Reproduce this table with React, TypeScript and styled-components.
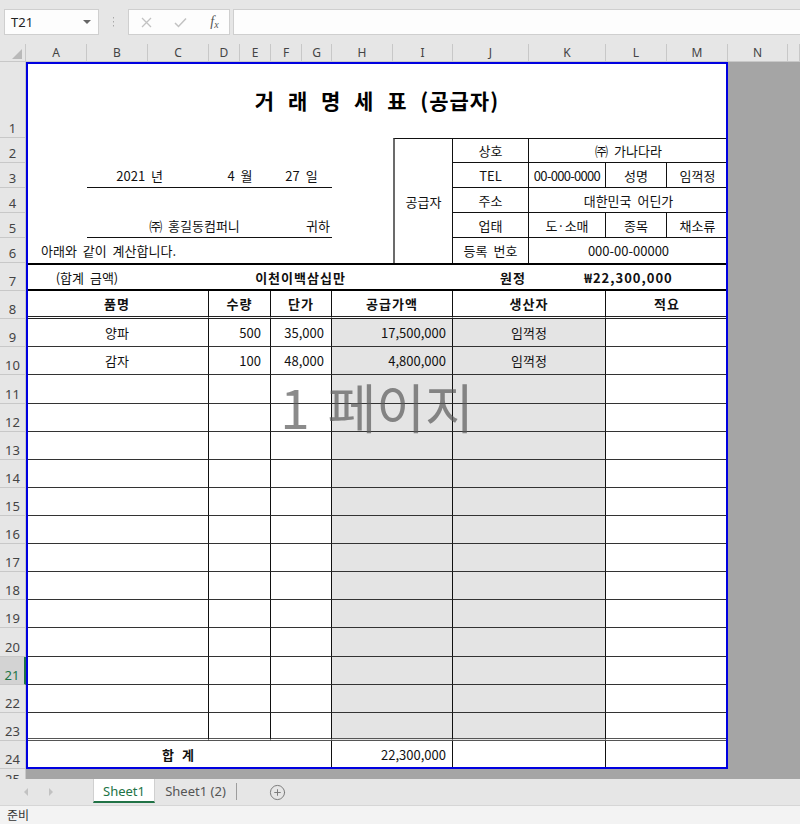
import React from "react";
import styled, { createGlobalStyle } from "styled-components";
import { CirclePlus } from "lucide-react";

const COLS = ["A", "B", "C", "D", "E", "F", "G", "H", "I", "J", "K", "L", "M", "N"];
const colIdx = (l: string) => COLS.indexOf(l) + 2;

const UI_FONT = `"Noto Sans", "Open Sans", "Noto Sans CJK KR", sans-serif`;
const SHEET_FONT = `"Noto Sans CJK KR", "Noto Sans", sans-serif`;

const THIN = "1px solid #111";
const GRID = "1px solid #333";
const THICK = "2px solid #000";
const DOUBLE = "3px double #222";
const DOUBLE_GRAY = "3px double #555";

const GlobalStyle = createGlobalStyle`
  html, body { margin: 0; padding: 0; }
  body { width: 800px; height: 824px; overflow: hidden; background: #e6e6e6; }
  *, *::before, *::after { box-sizing: border-box; }
`;

const Window = styled.div`
  width: 800px;
  height: 824px;
  display: flex;
  flex-direction: column;
  font-family: ${UI_FONT};
  background: #e6e6e6;
`;

/* ---------- formula bar ---------- */
const FormulaBar = styled.div`
  flex: none;
  height: 44px;
  display: flex;
  align-items: flex-start;
  padding: 9px 0 0 4px;
`;

const NameBox = styled.div`
  width: 95px;
  height: 26px;
  background: #fdfdfd;
  border: 1px solid #cfcfcf;
  display: flex;
  align-items: center;
  justify-content: space-between;
  padding: 0 7px 0 6px;
  font-size: 13px;
  color: #222;
`;

const Caret = styled.span`
  width: 0;
  height: 0;
  border-left: 4px solid transparent;
  border-right: 4px solid transparent;
  border-top: 4px solid #666;
`;

const Grip = styled.div`
  width: 29px;
  height: 26px;
  display: flex;
  align-items: center;
  justify-content: center;
`;

const FxBox = styled.div`
  width: 102px;
  height: 26px;
  background: #fdfdfd;
  border: 1px solid #cfcfcf;
  display: grid;
  grid-template-columns: 34px 35px 33px;
  align-items: center;
  justify-items: center;
`;

const FxLabel = styled.span`
  font-family: "Liberation Serif", "DejaVu Serif", serif;
  font-style: italic;
  font-size: 14px;
  color: #555;
  & > small {
    font-size: 10px;
    position: relative;
    top: 2px;
  }
`;

const FormulaInput = styled.div`
  flex: 1;
  margin-left: 3px;
  height: 26px;
  background: #fdfdfd;
  border: 1px solid #cfcfcf;
  border-right: none;
`;

/* ---------- sheet ---------- */
const SheetGrid = styled.div`
  flex: none;
  height: 735px;
  overflow: hidden;
  display: grid;
  grid-template-columns: 26px 61px 61px 61px 31px 31px 31px 30px 61px 60px 76px 77px 61px 61px 60px 1fr;
  grid-template-rows: 18px 76px repeat(5, 25px) repeat(18, 28.12px) 20px;
  background: #a5a5a5;
  font-family: ${SHEET_FONT};
`;

const Corner = styled.div`
  grid-column: 1;
  grid-row: 1;
  background: #e6e6e6;
  border-right: 1px solid #c8c8c8;
  border-bottom: 1px solid #c8c8c8;
  display: flex;
  align-items: flex-end;
  justify-content: flex-end;
  padding: 0 3px 2px 0;
  &::after {
    content: "";
    width: 0;
    height: 0;
    border-left: 10px solid transparent;
    border-bottom: 10px solid #b9b9b9;
  }
`;

const ColHead = styled.div<{ $col: number }>`
  grid-column: ${(p) => p.$col};
  grid-row: 1;
  background: #e6e6e6;
  border-right: 1px solid #c8c8c8;
  border-bottom: 1px solid #c8c8c8;
  display: flex;
  align-items: center;
  justify-content: center;
  font-family: ${UI_FONT};
  font-size: 12px;
  color: #444;
`;

const RowHead = styled.div<{ $row: number; $selected?: boolean }>`
  grid-column: 1;
  grid-row: ${(p) => p.$row + 1};
  background: ${(p) => (p.$selected ? "#d3d3d3" : "#e6e6e6")};
  color: ${(p) => (p.$selected ? "#217346" : "#444")};
  border-bottom: 1px solid #c8c8c8;
  border-right: ${(p) => (p.$selected ? "2px solid #217346" : "1px solid #c8c8c8")};
  display: flex;
  align-items: flex-end;
  justify-content: center;
  padding-bottom: 1px;
  font-family: ${UI_FONT};
  font-size: 13px;
  line-height: 16px;
`;

const PageArea = styled.div`
  grid-column: 2 / 15;
  grid-row: 2 / 26;
`;

const PageBg = styled(PageArea)`
  background: #fff;
`;

const PageFrame = styled(PageArea)`
  border: 2px solid #0000e0;
  pointer-events: none;
`;

const Watermark = styled(PageArea)`
  display: flex;
  align-items: center;
  justify-content: center;
  padding-bottom: 18px;
  font-family: "Noto Sans CJK KR", sans-serif;
  font-size: 53px;
  line-height: 0.8;
  word-spacing: 6px;
  color: rgba(90, 90, 90, 0.7);
  pointer-events: none;
`;

type CellP = {
  $from: string;
  $to?: string;
  $row: number;
  $rowTo?: number;
  $align?: "left" | "center" | "right";
  $bold?: boolean;
  $fill?: boolean;
  $bt?: string;
  $bb?: string;
  $bl?: string;
  $br?: string;
  $pl?: number;
  $pr?: number;
  $ls?: number;
  $size?: number;
};

const Cell = styled.div<CellP>`
  grid-column: ${(p) => colIdx(p.$from)} / ${(p) => colIdx(p.$to ?? p.$from) + 1};
  grid-row: ${(p) => p.$row + 1} / ${(p) => (p.$rowTo ?? p.$row) + 2};
  display: flex;
  align-items: center;
  justify-content: ${(p) =>
    p.$align === "left" ? "flex-start" : p.$align === "right" ? "flex-end" : "center"};
  padding: 0 ${(p) => p.$pr ?? 3}px 0 ${(p) => p.$pl ?? 3}px;
  background: ${(p) => (p.$fill ? "#e4e4e4" : "transparent")};
  border-top: ${(p) => p.$bt ?? "none"};
  border-bottom: ${(p) => p.$bb ?? "none"};
  border-left: ${(p) => p.$bl ?? "none"};
  border-right: ${(p) => p.$br ?? "none"};
  font-size: ${(p) => p.$size ?? 13}px;
  font-weight: ${(p) => (p.$bold ? 700 : 400)};
  letter-spacing: ${(p) => p.$ls ?? (p.$bold ? 1 : 0)}px;
  word-spacing: 3px;
  color: #111;
  white-space: nowrap;
  line-height: 1;
`;

const Title = styled(Cell)`
  word-spacing: 7px;
  color: #000;
`;

/* ---------- tabs & status ---------- */
const TabBar = styled.div`
  flex: none;
  height: 26px;
  display: flex;
  align-items: stretch;
  background: #e6e6e6;
`;

const NavArrows = styled.div`
  width: 93px;
  display: flex;
  align-items: center;
  padding-left: 24px;
  gap: 21px;
`;

const Arrow = styled.span<{ $dir: "left" | "right" }>`
  width: 0;
  height: 0;
  border-top: 4px solid transparent;
  border-bottom: 4px solid transparent;
  ${(p) =>
    p.$dir === "left" ? "border-right: 4px solid #c2c2c2;" : "border-left: 4px solid #c2c2c2;"}
`;

const Tab = styled.div<{ $active?: boolean; $w: number }>`
  width: ${(p) => p.$w}px;
  display: flex;
  align-items: center;
  justify-content: center;
  font-size: 13px;
  padding-top: 1px;
  color: ${(p) => (p.$active ? "#217346" : "#555")};
  background: ${(p) => (p.$active ? "#fff" : "transparent")};
  border-left: 1px solid ${(p) => (p.$active ? "#d0d0d0" : "transparent")};
  border-right: 1px solid ${(p) => (p.$active ? "#d0d0d0" : "transparent")};
  border-bottom: 2px solid ${(p) => (p.$active ? "#217346" : "transparent")};
  margin-bottom: 2px;
`;

const TabSep = styled.div`
  width: 1px;
  margin: 4px 0 5px 0;
  background: #9d9d9d;
`;

const AddSheet = styled.div`
  margin-left: 32px;
  display: flex;
  align-items: center;
  color: #7a7a7a;
`;

const StatusBar = styled.div`
  flex: none;
  height: 19px;
  background: #f3f3f3;
  border-top: 1px solid #d6d6d6;
  display: flex;
  align-items: center;
  padding-left: 7px;
  font-size: 12px;
  color: #333;
`;

type Item = { name: string; qty: string; price: string; amount: string; maker: string };
const items: Item[] = [
  { name: "양파", qty: "500", price: "35,000", amount: "17,500,000", maker: "임꺽정" },
  { name: "감자", qty: "100", price: "48,000", amount: "4,800,000", maker: "임꺽정" },
];

const bodyRows = Array.from({ length: 15 }, (_, i) => i + 9);
const rowNums = Array.from({ length: 25 }, (_, i) => i + 1);

export default function App() {
  return (
    <Window>
      <GlobalStyle />
      <FormulaBar>
        <NameBox>
          <span>T21</span>
          <Caret />
        </NameBox>
        <Grip>
          <svg width="3" height="12" viewBox="0 0 3 12">
            <rect x="1" y="1" width="1" height="1.5" fill="#a9a9a9" />
            <rect x="1" y="5" width="1" height="1.5" fill="#a9a9a9" />
            <rect x="1" y="9" width="1" height="1.5" fill="#a9a9a9" />
          </svg>
        </Grip>
        <FxBox>
          <svg width="11" height="11" viewBox="0 0 11 11">
            <path d="M1 1 L10 10 M10 1 L1 10" stroke="#c2c2c2" strokeWidth="1.3" fill="none" />
          </svg>
          <svg width="13" height="11" viewBox="0 0 13 11">
            <path d="M1 6 L4.5 9.5 L12 1.5" stroke="#c2c2c2" strokeWidth="1.5" fill="none" />
          </svg>
          <FxLabel>
            f<small>x</small>
          </FxLabel>
        </FxBox>
        <FormulaInput />
      </FormulaBar>

      <SheetGrid>
        <Corner />
        {COLS.map((c) => (
          <ColHead key={c} $col={colIdx(c)}>
            {c}
          </ColHead>
        ))}
        <ColHead $col={16} />
        {rowNums.map((n) => (
          <RowHead key={n} $row={n} $selected={n === 21}>
            {n}
          </RowHead>
        ))}

        <PageBg />

        <Title $from="A" $to="M" $row={1} $bold $size={21}>
          거 래 명 세 표 (공급자)
        </Title>

        <Cell $from="B" $to="C" $row={3} $align="right" $pr={46} $bb={THIN}>
          2021 년
        </Cell>
        <Cell $from="D" $to="E" $row={3} $bb={THIN}>
          4 월
        </Cell>
        <Cell $from="F" $to="G" $row={3} $bb={THIN}>
          27 일
        </Cell>
        <Cell $from="B" $to="F" $row={5} $bb={THIN}>
          ㈜ 홍길동컴퍼니
        </Cell>
        <Cell $from="G" $row={5} $align="right" $pr={2} $bb={THIN}>
          귀하
        </Cell>
        <Cell $from="A" $to="G" $row={6} $align="left" $pl={15}>
          아래와 같이 계산합니다.
        </Cell>

        <Cell $from="I" $row={2} $rowTo={6} $bt={THIN} $bl="2px solid #6b6b6b" $br={THIN}>
          공급자
        </Cell>
        <Cell $from="J" $row={2} $bt={THIN} $br={THIN} $bb={THIN}>
          상호
        </Cell>
        <Cell $from="K" $to="M" $row={2} $bt={THIN} $bb={THIN}>
          ㈜ 가나다라
        </Cell>
        <Cell $from="J" $row={3} $br={THIN} $bb={THIN}>
          TEL
        </Cell>
        <Cell $from="K" $row={3} $br={THIN} $bb={THIN} $ls={-0.7} $pl={0} $pr={0}>
          00-000-0000
        </Cell>
        <Cell $from="L" $row={3} $br={THIN} $bb={THIN}>
          성명
        </Cell>
        <Cell $from="M" $row={3} $bb={THIN}>
          임꺽정
        </Cell>
        <Cell $from="J" $row={4} $br={THIN} $bb={THIN}>
          주소
        </Cell>
        <Cell $from="K" $to="M" $row={4} $bb={THIN}>
          대한민국 어딘가
        </Cell>
        <Cell $from="J" $row={5} $br={THIN} $bb={THIN}>
          업태
        </Cell>
        <Cell $from="K" $row={5} $br={THIN} $bb={THIN}>
          도·소매
        </Cell>
        <Cell $from="L" $row={5} $br={THIN} $bb={THIN}>
          종목
        </Cell>
        <Cell $from="M" $row={5} $bb={THIN}>
          채소류
        </Cell>
        <Cell $from="J" $row={6} $br={THIN}>
          등록 번호
        </Cell>
        <Cell $from="K" $to="M" $row={6}>
          000-00-00000
        </Cell>

        <Cell $from="A" $to="B" $row={7} $bt={THICK} $bb={THICK}>
          (합계 금액)
        </Cell>
        <Cell $from="C" $to="I" $row={7} $bt={THICK} $bb={THICK} $bold>
          이천이백삼십만
        </Cell>
        <Cell $from="J" $row={7} $bt={THICK} $bb={THICK} $bold $align="right" $pr={3}>
          원정
        </Cell>
        <Cell $from="K" $to="M" $row={7} $bt={THICK} $bb={THICK} $bold>
          ₩22,300,000
        </Cell>

        <Cell $from="A" $to="C" $row={8} $bold $br={THIN} $bb={DOUBLE}>
          품명
        </Cell>
        <Cell $from="D" $to="E" $row={8} $bold $br={THIN} $bb={DOUBLE}>
          수량
        </Cell>
        <Cell $from="F" $to="G" $row={8} $bold $br={THIN} $bb={DOUBLE}>
          단가
        </Cell>
        <Cell $from="H" $to="I" $row={8} $bold $br={THIN} $bb={DOUBLE}>
          공급가액
        </Cell>
        <Cell $from="J" $to="K" $row={8} $bold $br={THIN} $bb={DOUBLE}>
          생산자
        </Cell>
        <Cell $from="L" $to="M" $row={8} $bold $bb={DOUBLE}>
          적요
        </Cell>

        {bodyRows.map((r) => {
          const it = items[r - 9];
          const bb = r === 23 ? DOUBLE_GRAY : GRID;
          return (
            <React.Fragment key={r}>
              <Cell $from="A" $to="C" $row={r} $br={THIN} $bb={bb}>
                {it?.name}
              </Cell>
              <Cell $from="D" $to="E" $row={r} $br={THIN} $bb={bb} $align="right" $pr={9}>
                {it?.qty}
              </Cell>
              <Cell $from="F" $to="G" $row={r} $br={THIN} $bb={bb} $align="right" $pr={7}>
                {it?.price}
              </Cell>
              <Cell $from="H" $to="I" $row={r} $br={THIN} $bb={bb} $align="right" $pr={6} $fill>
                {it?.amount}
              </Cell>
              <Cell $from="J" $to="K" $row={r} $br={THIN} $bb={bb} $fill>
                {it?.maker}
              </Cell>
              <Cell $from="L" $to="M" $row={r} $bb={bb} />
            </React.Fragment>
          );
        })}

        <Cell $from="A" $to="G" $row={24} $br={THIN} $bold>
          합 계
        </Cell>
        <Cell $from="H" $to="I" $row={24} $br={THIN} $align="right" $pr={6}>
          22,300,000
        </Cell>
        <Cell $from="J" $to="K" $row={24} $br={THIN} />
        <Cell $from="L" $to="M" $row={24} />

        <PageFrame />
        <Watermark>1 페이지</Watermark>
      </SheetGrid>

      <TabBar>
        <NavArrows>
          <Arrow $dir="left" />
          <Arrow $dir="right" />
        </NavArrows>
        <Tab $active $w={62}>
          Sheet1
        </Tab>
        <Tab $w={81}>Sheet1 (2)</Tab>
        <TabSep />
        <AddSheet>
          <CirclePlus size={17} strokeWidth={1.4} />
        </AddSheet>
      </TabBar>

      <StatusBar>준비</StatusBar>
    </Window>
  );
}
